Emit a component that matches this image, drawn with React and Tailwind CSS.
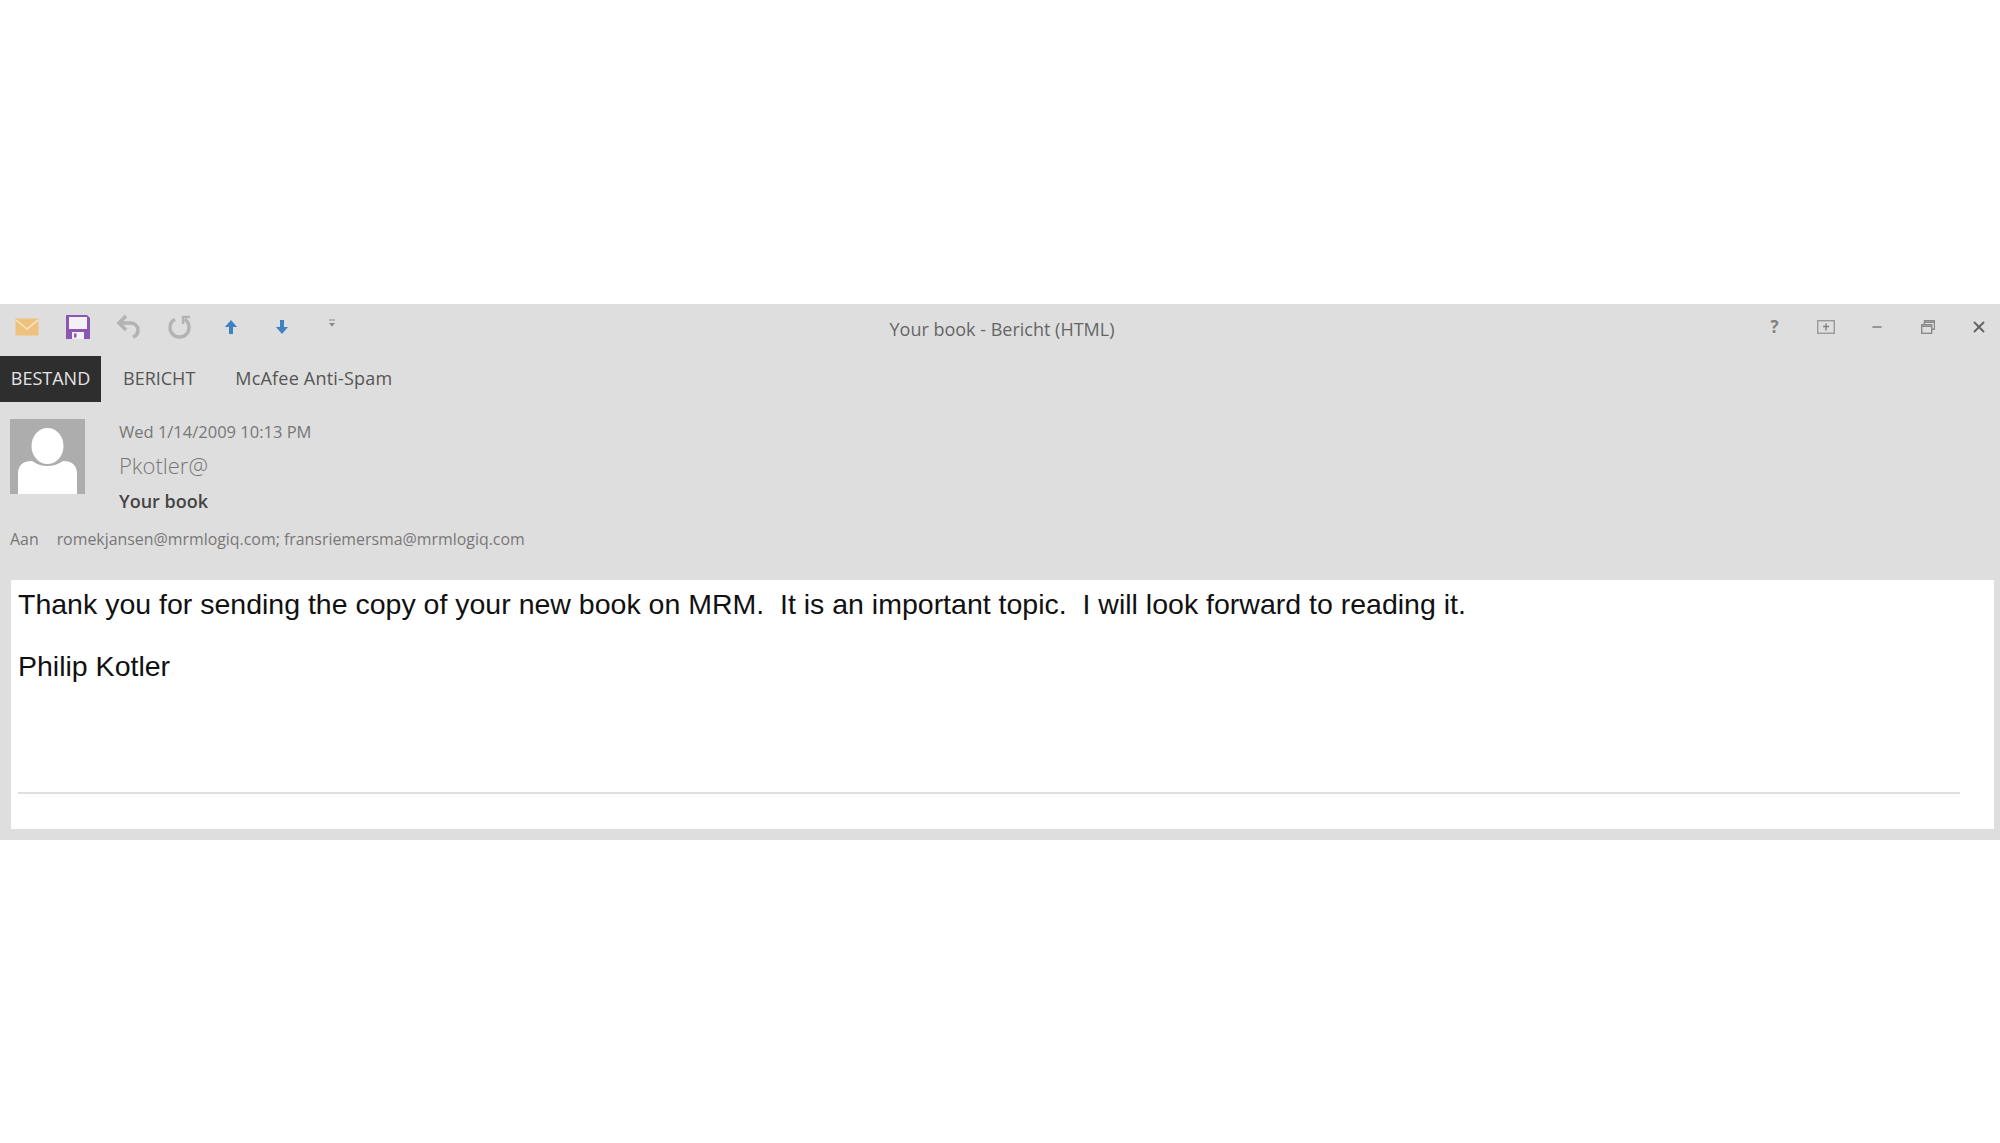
import { X, Minus } from 'lucide-react'

const uiFont = "font-['Open_Sans','Noto_Sans',sans-serif]"

function MailIcon () {
  return (
    <svg width="24" height="18" viewBox="0 0 24 18">
      <rect width="23" height="17" x="0.5" y="0.5" fill="#eec27c" />
      <path d="M1 2l11 9 11-9" fill="none" stroke="#f8e6c6" strokeWidth="1.6" />
    </svg>
  )
}

function SaveIcon () {
  return (
    <svg width="24" height="24" viewBox="0 0 24 24">
      <path d="M0 0h21l3 3v21H0z" fill="#8a58b0" />
      <rect x="3" y="2" width="18" height="12" fill="#f4f1f6" />
      <rect x="6" y="17" width="12" height="7" fill="#f4f1f6" />
      <rect x="8" y="18.500" width="2.500" height="4" fill="#8a58b0" />
    </svg>
  )
}

function UndoIcon () {
  return (
    <svg width="26" height="26" viewBox="0 0 26 26" fill="none" stroke="#b3b3b3" strokeWidth="3.600">
      <path d="M10 2L3 9l7 7" />
      <path d="M3 9h11c5 0 8 3 8 7 0 3-2 6-5 7" />
    </svg>
  )
}

function RedoIcon () {
  return (
    <svg width="24" height="24" viewBox="0 0 24 24" fill="none" stroke="#b3b3b3" strokeWidth="3.400">
      <path d="M7 4.500C3.500 6 2 9 2 12.500 2 18 6 22 11.500 22S21 18 21 12.500C21 9 19.500 6 16.500 4.500" />
      <path d="M22 2h-7v7" strokeWidth="2.400" />
    </svg>
  )
}

function ArrowUp () {
  return (
    <svg width="14" height="16" viewBox="0 0 14 16">
      <path d="M7 1l6 7H9v7H5V8H1z" fill="#3f82c4" />
    </svg>
  )
}

function ArrowDown () {
  return (
    <svg width="14" height="16" viewBox="0 0 14 16">
      <path d="M7 15L1 8h4V1h4v7h4z" fill="#3f82c4" />
    </svg>
  )
}

function QuickMore () {
  return (
    <svg width="8" height="8" viewBox="0 0 8 8">
      <path d="M1 1h6" stroke="#888" strokeWidth="1" />
      <path d="M1 4h6L4 7.500z" fill="#888" />
    </svg>
  )
}

function RibbonIcon () {
  return (
    <svg width="18" height="14" viewBox="0 0 18 14" fill="none" stroke="#9a9a9a" strokeWidth="1.400">
      <rect x="0.700" y="0.700" width="16.600" height="12.600" />
      <path d="M9 3.500v7M6 6.500h6" stroke="#808080" />
    </svg>
  )
}

function RestoreIcon () {
  return (
    <svg width="14" height="14" viewBox="0 0 14 14" fill="none" stroke="#8a8a8a" strokeWidth="1.400">
      <rect x="0.700" y="4.700" width="10" height="8.600" />
      <path d="M3.500 4.500V0.800h10v8.500h-3" />
      <path d="M0.700 6.200h10M3.500 2.200h10" />
    </svg>
  )
}

function Avatar () {
  return (
    <svg width="75" height="75" viewBox="0 0 75 75" className="shrink-0">
      <rect width="75" height="75" fill="#adadad" />
      <ellipse cx="37.500" cy="27" rx="16" ry="18" fill="#fff" />
      <path d="M8 75V55c0-9 5-13 14-13 4 3 10 5 15.500 5S49 45 53 42c9 0 14 4 14 13v20z" fill="#fff" />
    </svg>
  )
}

export default function App () {
  return (
    <div className={`min-h-screen bg-white flex flex-col justify-center ${uiFont}`}>
      <div className="bg-[#dedede] h-[536px] flex flex-col">
        {/* title bar */}
        <div className="h-[52px] flex items-center relative pb-[6px]">
          <div className="flex items-center pl-[1px]">
            <div className="w-[51px] flex justify-center"><MailIcon /></div>
            <div className="w-[51px] flex justify-center"><SaveIcon /></div>
            <div className="w-[51px] flex justify-center"><UndoIcon /></div>
            <div className="w-[51px] flex justify-center"><RedoIcon /></div>
            <div className="w-[51px] flex justify-center"><ArrowUp /></div>
            <div className="w-[51px] flex justify-center"><ArrowDown /></div>
            <div className="w-[49px] flex justify-center -mt-2"><QuickMore /></div>
          </div>
          <div className="absolute left-0 right-0 top-[12px] text-center text-[18px] leading-[26px] text-[#666] pl-[4px]">
            Your book - Bericht (HTML)
          </div>
          <div className="ml-auto flex items-center text-[#808080]">
            <div className="w-[51px] flex justify-center text-[17px] font-bold leading-none">?</div>
            <div className="w-[51px] flex justify-center"><RibbonIcon /></div>
            <div className="w-[51px] flex justify-center"><Minus size={14} strokeWidth={2.400} /></div>
            <div className="w-[51px] mr-[4px] flex justify-center"><RestoreIcon /></div>
            <div className="w-[43px] flex justify-center text-[#666]"><X size={18} strokeWidth={2.600} /></div>
          </div>
        </div>

        {/* tabs */}
        <div className="h-[46px] flex items-center text-[18px] text-[#555]">
          <div className="h-full w-[101px] bg-[#2e2e2e] text-[#e4e4e4] flex items-center justify-center">BESTAND</div>
          <div className="ml-[22px]">BERICHT</div>
          <div className="ml-[40px] tracking-[0.2px]">McAfee Anti-Spam</div>
        </div>

        {/* message header */}
        <div className="flex pl-[10px] pt-[17px]">
          <Avatar />
          <div className="ml-[34px] flex flex-col">
            <div className="mt-[3px] text-[16.500px] leading-[20px] text-[#777]">Wed 1/14/2009 10:13 PM</div>
            <div className="mt-[8px] text-[22px] leading-[30px] font-light text-[#777]">Pkotler@</div>
            <div className="mt-[9px] text-[18px] leading-[24px] font-semibold text-[#444]">Your book</div>
          </div>
        </div>
        <div className="flex pl-[10px] mt-[15px] text-[15.900px] leading-[22px] text-[#777]">
          <span>Aan</span>
          <span className="ml-[18px]">romekjansen@mrmlogiq.com; fransriemersma@mrmlogiq.com</span>
        </div>

        {/* message body */}
        <div className="ml-[11px] mr-[6px] mt-[30px] h-[249px] bg-white pl-[7px] pr-[34px] font-['Liberation_Sans',Arial,sans-serif] text-[28.500px] leading-[31px] text-[#111] flex flex-col">
          <p className="mt-[9px] whitespace-nowrap">Thank you for sending the copy of your new book on MRM.&nbsp; It is an important topic.&nbsp; I will look forward to reading it.</p>
          <p className="mt-[31px]">Philip Kotler</p>
          <div className="mt-[110px] border-t-2 border-[#e0e0e0]" />
        </div>
      </div>
    </div>
  )
}
